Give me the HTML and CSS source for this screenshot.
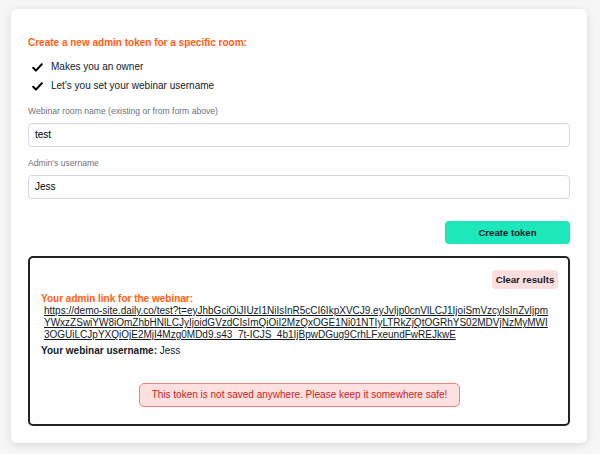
FILE: index.html
```html
<!DOCTYPE html>
<html>
<head>
<meta charset="utf-8">
<link rel="stylesheet" href="styles.css">
</head>
<body>
<div class="card">
  <h2 class="title">Create a new admin token for a specific room:</h2>
  <ul class="checks">
    <li><svg class="check" viewBox="0 0 11 9" width="11" height="9"><path d="M1.2 4.8 L3.9 7.6 L9.8 1.2" fill="none" stroke="#000" stroke-width="2" stroke-linecap="round" stroke-linejoin="round"/></svg>Makes you an owner</li>
    <li><svg class="check" viewBox="0 0 11 9" width="11" height="9"><path d="M1.2 4.8 L3.9 7.6 L9.8 1.2" fill="none" stroke="#000" stroke-width="2" stroke-linecap="round" stroke-linejoin="round"/></svg>Let's you set your webinar username</li>
  </ul>
  <label class="label first">Webinar room name (existing or from form above)</label>
  <div class="input">test</div>
  <label class="label">Admin's username</label>
  <div class="input">Jess</div>
  <div class="actions"><button class="create">Create token</button></div>
  <div class="results">
    <div class="clear-row"><button class="clear">Clear results</button></div>
    <div class="link-title">Your admin link for the webinar:</div>
    <a class="link" href="#">https://demo-site.daily.co/test?t=eyJhbGciOiJIUzI1NiIsInR5cCI6IkpXVCJ9.eyJvIjp0cnVlLCJ1IjoiSmVzcyIsInZvIjpm<br>YWxzZSwiYW8iOmZhbHNlLCJyIjoidGVzdCIsImQiOiI2MzQxOGE1Ni01NTIyLTRkZjQtOGRhYS02MDVjNzMyMWI<br>3OGUiLCJpYXQiOjE2MjI4Mzg0MDd9.s43_7t-ICJS_4b1IjBpwDGug9CrhLFxeundFwREJkwE</a>
    <div class="username"><b>Your webinar username:</b> Jess</div>
    <div class="warn-row"><div class="warn">This token is not saved anywhere. Please keep it somewhere safe!</div></div>
  </div>
</div>
</body>
</html>
```
FILE: styles.css
```css
html, body { margin: 0; padding: 0; }
body {
  background: #f6f6f6;
  font-family: "Liberation Sans", Arial, sans-serif;
  color: #121a26;
  padding: 9px 13px 11px 11px;
}
.card {
  background: #fff;
  border-radius: 6px;
  box-shadow: 0 2px 8px rgba(0,0,0,0.12);
  padding: 28px 17px 17px 17px;
  display: flex;
  flex-direction: column;
}
.title {
  margin: 0;
  font-size: 10px;
  line-height: 12px;
  font-weight: bold;
  color: #ff6016;
}
.checks {
  list-style: none;
  margin: 12px 0 0 0;
  padding: 0 0 0 4px;
  display: flex;
  flex-direction: column;
  gap: 7px;
}
.checks li {
  display: flex;
  align-items: center;
  font-size: 10px;
  line-height: 12px;
  color: #121a26;
}
.check { margin-right: 8px; flex: none; }
.label {
  display: block;
  margin-top: 11px;
  font-size: 8.6px;
  line-height: 10px;
  color: #6b7383;
}
.label.first { margin-top: 14px; }
.input {
  margin-top: 7px;
  height: 22px;
  border: 1px solid #d3dae6;
  border-radius: 4px;
  padding: 0 6px;
  font-size: 10px;
  line-height: 22px;
  color: #000;
}
.actions {
  display: flex;
  justify-content: flex-end;
  margin-top: 22px;
}
.create {
  width: 125px;
  height: 23px;
  border: none;
  border-radius: 4px;
  background: #1de8bc;
  font-family: "Liberation Sans", Arial, sans-serif;
  font-size: 9.6px;
  font-weight: bold;
  color: #121a26;
  padding: 0;
}
.results {
  box-sizing: border-box;
  margin-top: 12px;
  height: 170px;
  border: 2px solid #232323;
  border-radius: 5px;
  padding: 12px 10px 0 11px;
  display: flex;
  flex-direction: column;
}
.clear-row { display: flex; justify-content: flex-end; }
.clear {
  background: #fedddd;
  border: none;
  border-radius: 4px;
  height: 19px;
  width: 66px;
  padding: 0;
  font-family: "Liberation Sans", Arial, sans-serif;
  font-size: 9.7px;
  font-weight: bold;
  color: #121a26;
}
.link-title {
  margin-top: 4px;
  font-size: 10px;
  line-height: 12px;
  font-weight: bold;
  color: #ff6016;
}
.link {
  display: block;
  padding-left: 3px;
  font-size: 10px;
  line-height: 12px;
  color: #121a26;
  text-decoration: underline;
  white-space: nowrap;
}
.username {
  margin-top: 4px;
  font-size: 10px;
  line-height: 12px;
  color: #121a26;
}
.username b { font-weight: bold; }
.warn-row {
  display: flex;
  justify-content: center;
  margin-top: 26px;
}
.warn {
  box-sizing: border-box;
  background: #fde0e0;
  border: 1px solid #f08080;
  border-radius: 5px;
  padding: 0 12px;
  height: 24px;
  line-height: 22px;
  font-size: 10px;
  color: #c81e1e;
}
```
